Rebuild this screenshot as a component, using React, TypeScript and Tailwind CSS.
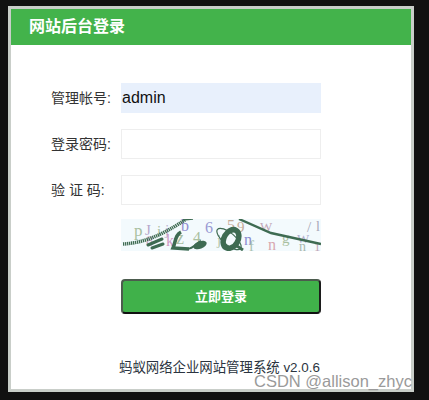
const fieldFont = { fontFamily: "'Liberation Sans', 'Noto Sans CJK SC', sans-serif" };

type Noise = { t: string; x: number; y: number; c: string; s: number };

const noise: Noise[] = [
  { t: "p", x: 13, y: 17, c: "#a9c0a0", s: 17 },
  { t: "J", x: 24, y: 16, c: "#b5a8cc", s: 15 },
  { t: "i", x: 36, y: 17, c: "#a9c0a0", s: 15 },
  { t: "j", x: 44, y: 16, c: "#b9b0d0", s: 15 },
  { t: "8", x: 25, y: 27, c: "#c8a5bd", s: 15 },
  { t: "k", x: 45, y: 27, c: "#d09ac4", s: 16 },
  { t: "z", x: 55, y: 25, c: "#a9bfa5", s: 18 },
  { t: "b", x: 60, y: 12, c: "#8f8cd0", s: 16 },
  { t: "4", x: 72, y: 24, c: "#a9c0a0", s: 16 },
  { t: "6", x: 84, y: 14, c: "#9a9ad4", s: 16 },
  { t: "j", x: 96, y: 26, c: "#b0c4a8", s: 15 },
  { t: "5", x: 106, y: 12, c: "#c4ab98", s: 16 },
  { t: "9", x: 116, y: 13, c: "#c4ab98", s: 15 },
  { t: "n", x: 123, y: 26, c: "#8b8cd0", s: 16 },
  { t: "W", x: 139, y: 12, c: "#c0a8b8", s: 13 },
  { t: "f", x: 128, y: 32, c: "#a8c0b0", s: 15 },
  { t: "n", x: 147, y: 31, c: "#d8a8b0", s: 16 },
  { t: "g", x: 161, y: 24, c: "#a9c0a0", s: 15 },
  { t: "W", x: 176, y: 24, c: "#b0b0d0", s: 13 },
  { t: "/", x: 186, y: 13, c: "#a8a8b8", s: 15 },
  { t: "l", x: 195, y: 12, c: "#a8a8b8", s: 14 },
  { t: "n", x: 178, y: 32, c: "#a8b8b0", s: 14 },
  { t: "1", x: 193, y: 32, c: "#c0a8b8", s: 13 },
];

function Captcha() {
  return (
    <svg viewBox="0 0 200 32" className="block w-[200px] h-[32px] bg-[#f3fafd]">
      {noise.map((n, i) => (
        <text key={i} x={n.x} y={n.y} fill={n.c} fontSize={n.s} fontFamily="'Liberation Serif', serif">
          {n.t}
        </text>
      ))}
      {/* hatched curve on the left */}
      <path d="M2 25 C 28 24, 50 10, 64 1" fill="none" stroke="#3e6b52" strokeWidth="3.5" strokeDasharray="1.3 0.7" />
      <path d="M62 1 L 72 0" fill="none" stroke="#3e6b52" strokeWidth="1.4" />
      <path d="M118 0 L 150 14 L 200 25" fill="none" stroke="#3e6b52" strokeWidth="2.4" />
      {/* distorted big letters */}
      <path d="M27 26 L 41 20 M31 29 L 42 25" fill="none" stroke="#3e6b52" strokeWidth="3" strokeLinecap="round" />
      <path d="M60 13 C 54 16, 55 22, 52 29 L 68 30" fill="none" stroke="#3e6b52" strokeWidth="3.5" />
      <path d="M66 30 C 72 30, 76 24, 80 22" fill="none" stroke="#3e6b52" strokeWidth="2" />
      <ellipse cx="79" cy="26" rx="7" ry="3.8" fill="#3e6b52" transform="rotate(-20 79 26)" />
      <ellipse cx="110" cy="20" rx="7" ry="10" fill="none" stroke="#3e6b52" strokeWidth="5.5" transform="rotate(30 110 20)" />
      <ellipse cx="108" cy="20" rx="15" ry="6" fill="none" stroke="#3e6b52" strokeWidth="1.2" transform="rotate(40 108 20)" />
      <path d="M113 25 L 122 31" fill="none" stroke="#3e6b52" strokeWidth="3" />
    </svg>
  );
}

function Field({ label, value, bg, border }: { label: string; value?: string; bg: string; border: string }) {
  return (
    <div className="flex items-center h-[30px]">
      <label className="w-[110px] pl-[40px] text-[14px] text-[#333] whitespace-pre">{label}</label>
      <div className={`w-[200px] h-[30px] border flex items-center text-[16px] text-[#111] ${bg} ${border}`}>
        {value}
      </div>
    </div>
  );
}

export default function App() {
  return (
    <div className="relative w-[429px] h-[400px] bg-[#111111] overflow-hidden pl-[8px] pt-[6px]" style={fieldFont}>
      <div className="w-[406px] h-[386px] bg-white border-[3px] border-[#c9cec9]">
        <h1 className="h-[36px] bg-[#43b34b] pl-[18px] text-[16px] leading-[36px] font-bold text-white">网站后台登录</h1>
        <div className="pt-[38px] flex flex-col gap-[16px]">
          <Field label="管理帐号:" value="admin" bg="bg-[#e8f0fc]" border="border-[#e8f0fc]" />
          <Field label="登录密码:" bg="bg-white" border="border-[#eeeeee]" />
          <Field label="验 证 码:" bg="bg-white" border="border-[#eeeeee]" />
        </div>
        <div className="ml-[110px] mt-[14px]">
          <Captcha />
          <button className="block mt-[28px] w-[200px] h-[35px] rounded-[4px] bg-[#40b14a] border-2 border-t-[#4c5c4e] border-l-[#4c5c4e] border-r-[#1c1c1c] border-b-[#111111] text-[13px] font-bold text-white">
            立即登录
          </button>
        </div>
        <p className="mt-[45px] ml-[108px] text-[13.4px] leading-[18px] text-[#2b3440] whitespace-nowrap">蚂蚁网络企业网站管理系统 v2.0.6</p>
      </div>
      <span className="absolute left-[254px] top-[371px] text-[16.5px] leading-[20px] text-[#9a9a9a] whitespace-nowrap">CSDN @allison_zhyc</span>
    </div>
  );
}
